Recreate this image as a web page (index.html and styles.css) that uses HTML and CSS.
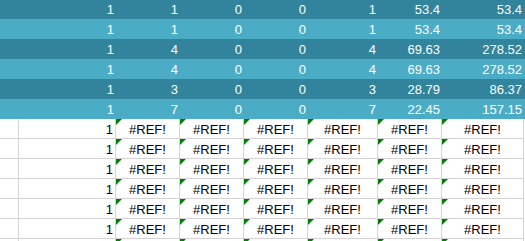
FILE: index.html
```html
<!DOCTYPE html>
<html>
<head>
<meta charset="utf-8">
<link rel="stylesheet" href="styles.css">
</head>
<body>
<div class="sheet">
  <div class="table teal">
    <div class="row dark"><span></span><span>1</span><span>1</span><span>0</span><span>0</span><span>1</span><span>53.4</span><span>53.4</span></div>
    <div class="row light"><span></span><span>1</span><span>1</span><span>0</span><span>0</span><span>1</span><span>53.4</span><span>53.4</span></div>
    <div class="row dark"><span></span><span>1</span><span>4</span><span>0</span><span>0</span><span>4</span><span>69.63</span><span>278.52</span></div>
    <div class="row light"><span></span><span>1</span><span>4</span><span>0</span><span>0</span><span>4</span><span>69.63</span><span>278.52</span></div>
    <div class="row dark"><span></span><span>1</span><span>3</span><span>0</span><span>0</span><span>3</span><span>28.79</span><span>86.37</span></div>
    <div class="row light"><span></span><span>1</span><span>7</span><span>0</span><span>0</span><span>7</span><span>22.45</span><span>157.15</span></div>
  </div>
  <div class="table grid">
    <div class="row"><span></span><span class="num">1</span><span class="err">#REF!</span><span class="err">#REF!</span><span class="err">#REF!</span><span class="err">#REF!</span><span class="err">#REF!</span><span class="err">#REF!</span></div>
    <div class="row"><span></span><span class="num">1</span><span class="err">#REF!</span><span class="err">#REF!</span><span class="err">#REF!</span><span class="err">#REF!</span><span class="err">#REF!</span><span class="err">#REF!</span></div>
    <div class="row"><span></span><span class="num">1</span><span class="err">#REF!</span><span class="err">#REF!</span><span class="err">#REF!</span><span class="err">#REF!</span><span class="err">#REF!</span><span class="err">#REF!</span></div>
    <div class="row"><span></span><span class="num">1</span><span class="err">#REF!</span><span class="err">#REF!</span><span class="err">#REF!</span><span class="err">#REF!</span><span class="err">#REF!</span><span class="err">#REF!</span></div>
    <div class="row"><span></span><span class="num">1</span><span class="err">#REF!</span><span class="err">#REF!</span><span class="err">#REF!</span><span class="err">#REF!</span><span class="err">#REF!</span><span class="err">#REF!</span></div>
    <div class="row"><span></span><span class="num">1</span><span class="err">#REF!</span><span class="err">#REF!</span><span class="err">#REF!</span><span class="err">#REF!</span><span class="err">#REF!</span><span class="err">#REF!</span></div>
    <div class="row"><span></span><span class="num"></span><span class="err"></span><span class="err"></span><span class="err"></span><span class="err"></span><span class="err"></span><span class="err"></span></div>
  </div>
</div>
</body>
</html>
```
FILE: styles.css
```css
html, body {
  margin: 0;
  padding: 0;
  background: #ffffff;
  overflow: hidden;
}
.sheet {
  width: 525px;
  height: 241px;
  overflow: hidden;
  font-family: "Liberation Sans", Arial, sans-serif;
  font-size: 13px;
}
.teal {
  margin-top: -1px;
}
.row {
  display: grid;
  grid-template-columns: 19px 97px 64px 64px 64px 70px 64px 82px 1px;
  height: 20px;
}
.row > span {
  box-sizing: border-box;
  height: 20px;
  padding: 2px 2px 0 0;
  line-height: 18px;
  text-align: right;
  white-space: nowrap;
  overflow: hidden;
}
.teal .row {
  color: #ffffff;
}
.dark { background: #31849b; }
.light { background: #4bacc6; }
.grid .row > span {
  border-right: 1px solid #d4d4d4;
  border-bottom: 1px solid #d4d4d4;
  color: #000000;
  position: relative;
}
.grid .row > span.err {
  text-align: center;
  padding-right: 0;
}
.grid .row > span.err::before {
  content: "";
  position: absolute;
  left: 0;
  top: 0;
  width: 0;
  height: 0;
  border-top: 6px solid #008000;
  border-right: 6px solid transparent;
}
```
